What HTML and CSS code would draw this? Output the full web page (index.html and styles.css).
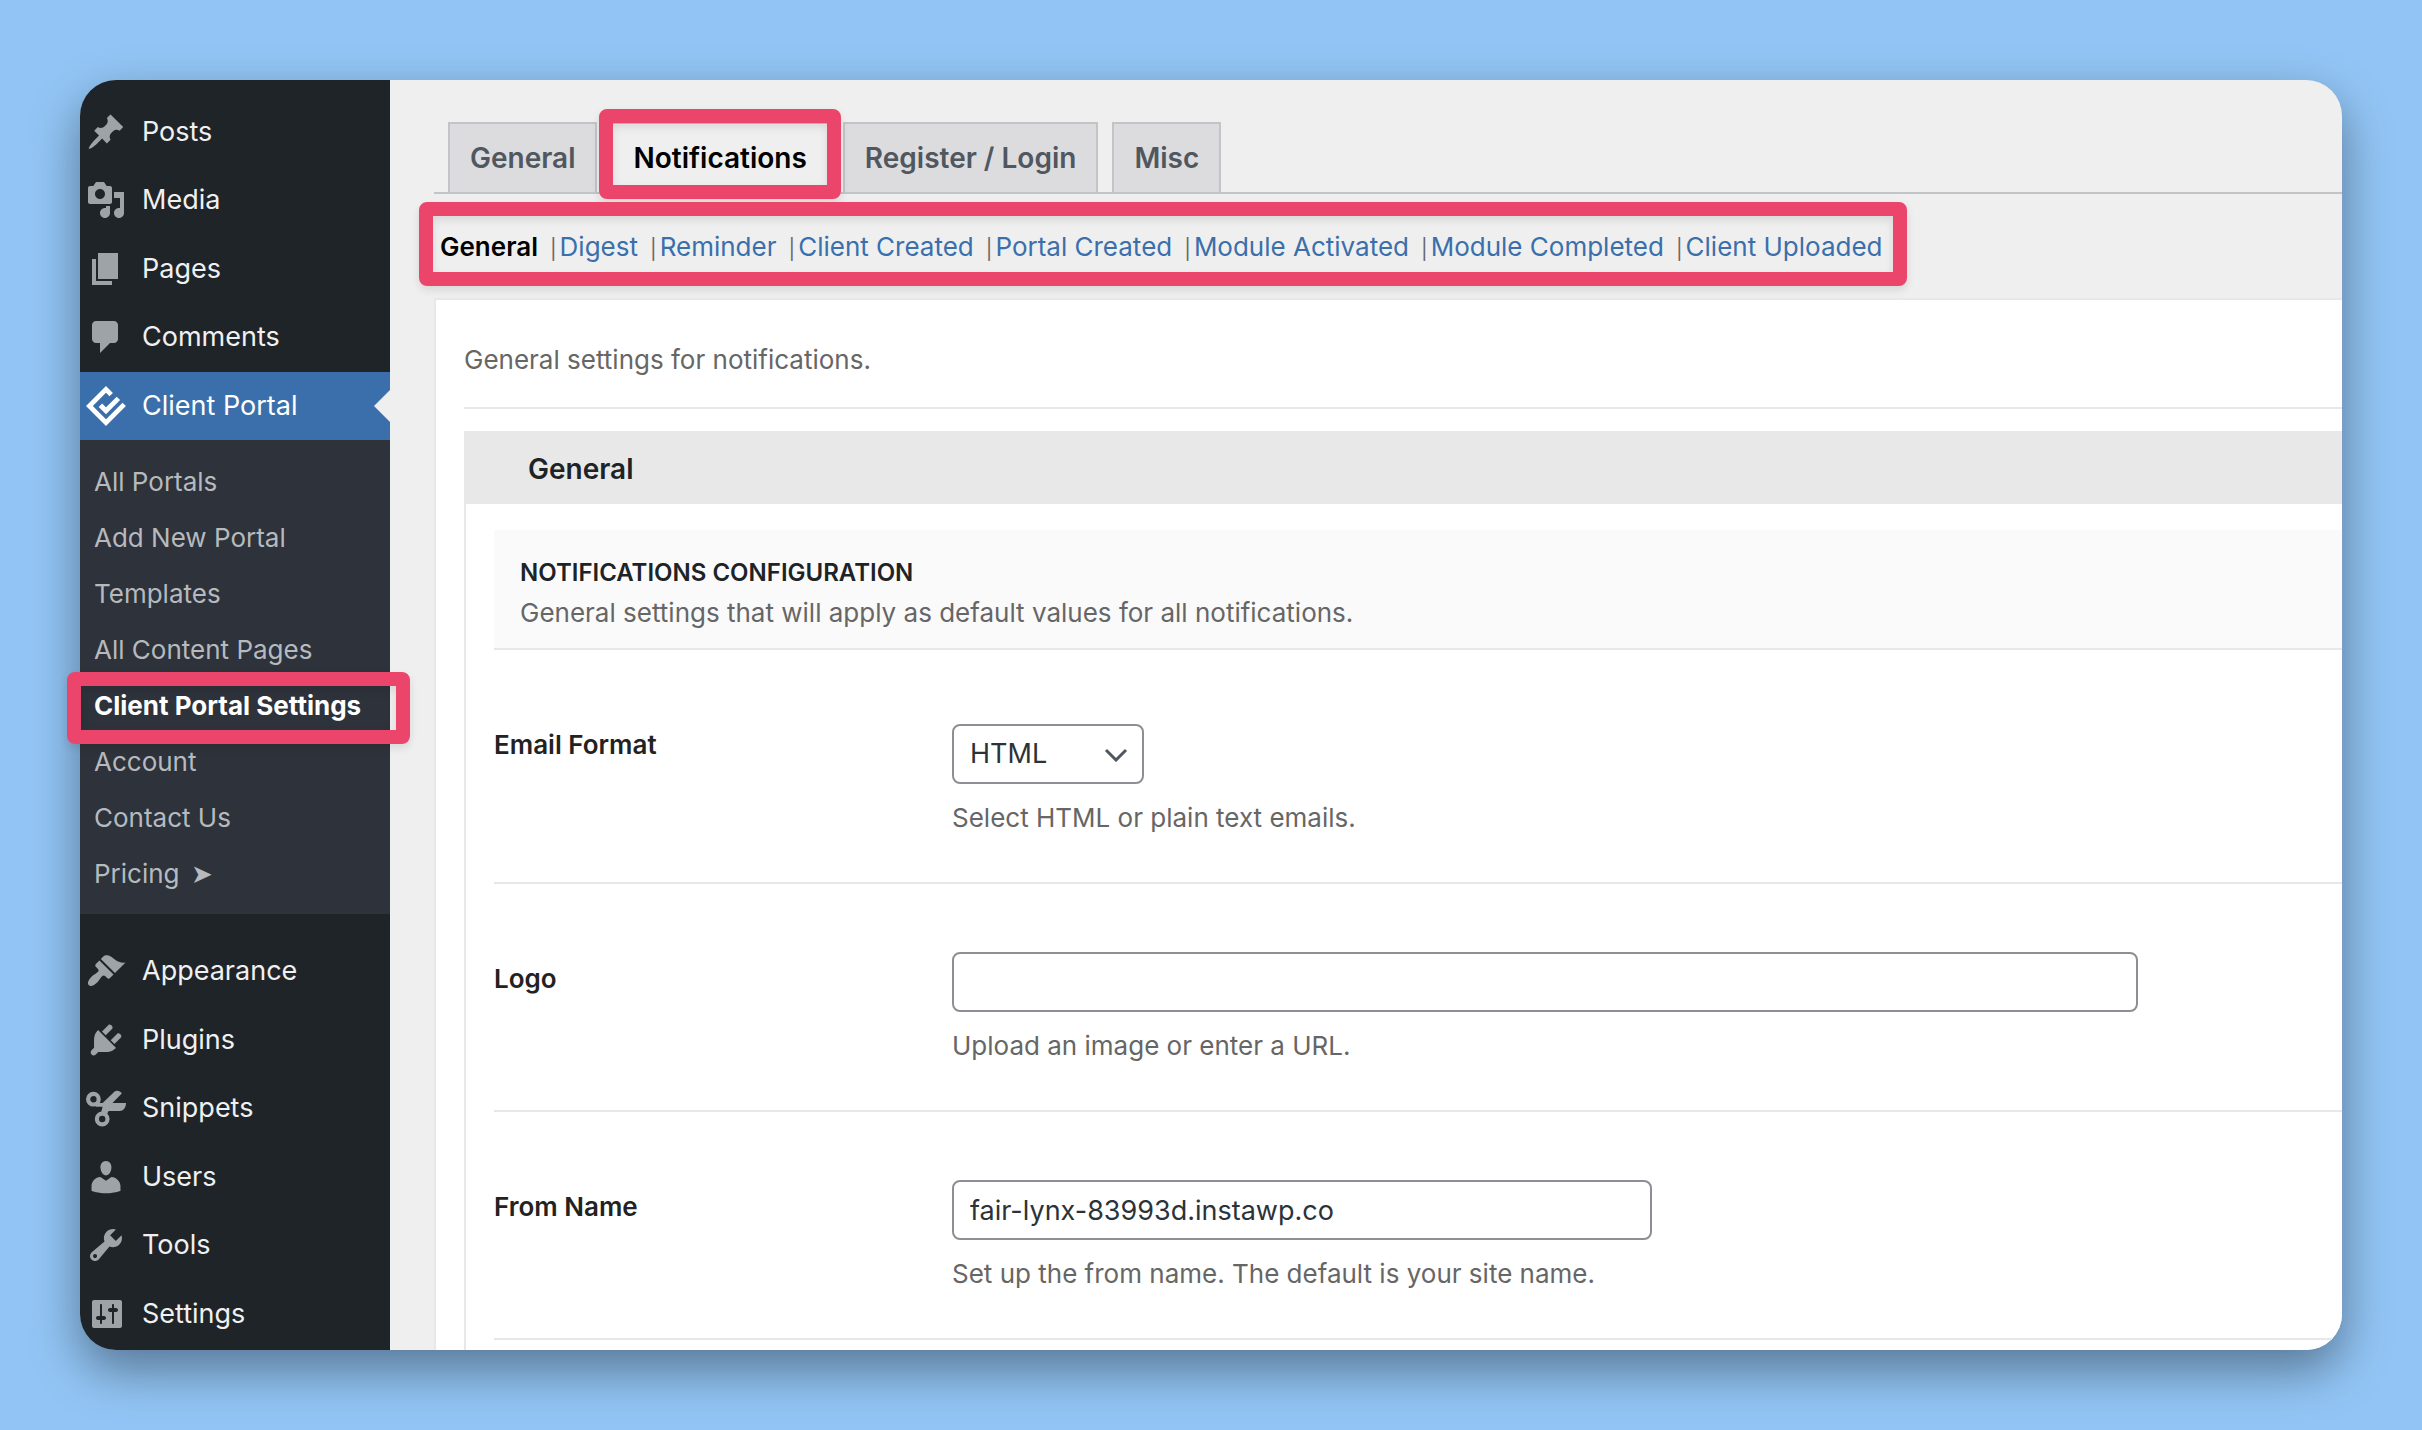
FILE: index.html
```html
<!DOCTYPE html>
<html lang="en">
<head>
  <meta charset="UTF-8">
  <meta name="viewport" content="width=device-width, initial-scale=1.0">
  <title>Client Portal Settings</title>
  <link rel="stylesheet" href="styles.css">
</head>
<body>
  <div class="window">
    <nav class="sidebar" aria-label="Main menu">
      <ul class="menu">
        <li><a href="#"><svg viewBox="0 0 20 20"><path d="M10.44 3.02l1.82-1.82 6.36 6.35-1.83 1.82c-1.05-.68-2.48-.57-3.41.36l-.75.75c-.92.93-1.04 2.35-.35 3.41l-1.83 1.82-2.41-2.41-2.8 2.79c-.42.42-3.38 2.71-3.8 2.29s1.86-3.39 2.28-3.81l2.79-2.79L4.1 9.36l1.83-1.82c1.05.69 2.48.57 3.4-.36l.75-.75c.93-.92 1.05-2.35.36-3.41z"/></svg>Posts</a></li>
        <li><a href="#"><svg viewBox="0 0 20 20"><path d="M13 11V4c0-.55-.45-1-1-1h-1.67L9 1H5L3.67 3H2c-.55 0-1 .45-1 1v7c0 .55.45 1 1 1h10c.55 0 1-.45 1-1zM7 4.5c1.38 0 2.5 1.12 2.5 2.5S8.38 9.5 7 9.5 4.5 8.38 4.5 7 5.62 4.5 7 4.5zM14 6h5v10.5c0 1.38-1.12 2.5-2.5 2.5S14 17.88 14 16.5s1.12-2.5 2.5-2.5c.17 0 .34.02.5.05V9h-3V6zm-4 8.05V13h2v3.5c0 1.38-1.12 2.5-2.5 2.5S7 17.88 7 16.5 8.12 14 9.5 14c.17 0 .34.02.5.05z"/></svg>Media</a></li>
        <li><a href="#"><svg viewBox="0 0 20 20"><path d="M6 15V2h10v13H6zm-1 1h8v2H3V5h2v11z"/></svg>Pages</a></li>
        <li><a href="#"><svg viewBox="0 0 20 20"><path d="M5 2h9c1.1 0 2 .9 2 2v7c0 1.1-.9 2-2 2h-2l-5 5v-5H5c-1.1 0-2-.9-2-2V4c0-1.1.9-2 2-2z"/></svg>Comments</a></li>
        <li class="open">
          <a href="#" class="active"><svg viewBox="0 0 20 20"><g fill="none" stroke="currentColor" stroke-width="2.4"><path d="M12.6 4.3L10 1.7 1.7 10l8.3 8.3 9.1-9.1"/><path d="M7.2 9.6l2.8 2.8 6.2-6.2"/></g></svg>Client Portal</a>
          <ul class="submenu">
            <li><a href="#">All Portals</a></li>
            <li><a href="#">Add New Portal</a></li>
            <li><a href="#">Templates</a></li>
            <li><a href="#">All Content Pages</a></li>
            <li><a href="#" class="current marked">Client Portal Settings</a></li>
            <li><a href="#">Account</a></li>
            <li><a href="#">Contact Us</a></li>
            <li><a href="#">Pricing <span class="arrow">➤</span></a></li>
          </ul>
        </li>
        <li><a href="#"><svg viewBox="0 0 20 20"><path d="M14.48 11.06L7.41 3.99l1.5-1.5c.5-.56 2.3-.47 3.51.32 1.21.8 1.43 1.28 2.91 2.1 1.18.64 2.45 1.26 4.45.85zm-.71.71L6.7 4.7 4.93 6.47c-.39.39-.39 1.02 0 1.41l1.06 1.06c.39.39.39 1.03 0 1.42-.6.6-1.43 1.11-2.21 1.69-.35.26-.7.53-1.01.84C1.43 14.23.4 16.08 1.4 17.07c.99 1 2.84-.03 4.18-1.36.31-.31.58-.66.85-1.02.57-.78 1.08-1.61 1.69-2.21.39-.39 1.02-.39 1.41 0l1.06 1.06c.39.39 1.02.39 1.41 0z"/></svg>Appearance</a></li>
        <li><a href="#"><svg viewBox="0 0 20 20"><path d="M13.11 4.36L9.87 7.6 8 5.73l3.24-3.24c.35-.34 1.05-.2 1.56.32.52.51.66 1.21.31 1.55zm-8 1.77l.91-1.12 9.01 9.01-1.19.84c-.71.71-2.63 1.16-3.82 1.16H6.14L4.9 17.26c-.59.59-1.54.59-2.12 0-.59-.58-.59-1.53 0-2.12l1.24-1.24v-3.88c0-1.13.4-3.19 1.09-3.89zm7.26 3.97l3.24-3.24c.34-.35 1.04-.21 1.55.31.52.51.66 1.21.31 1.55l-3.24 3.25z"/></svg>Plugins</a></li>
        <li><a href="#"><svg viewBox="0 0 20 20"><g fill="none" stroke="currentColor" stroke-width="2.1"><circle cx="3.7" cy="5.6" r="2.65"/><circle cx="8.1" cy="15.5" r="2.65"/></g><path d="M5.8 7.5H8.3L13.8 2.2c1.2-1.2 3.2-1 4.1.6L13.2 7.5H20c0 2.3-1.3 4-3.2 4H11.3L10.2 13.6 7.5 12.5 8.3 9.4H4.8z"/></svg>Snippets</a></li>
        <li><a href="#"><svg viewBox="0 0 20 20"><path d="M10 9.25c-2.27 0-2.73-3.44-2.73-3.44C7 4.02 7.82 2 9.97 2c2.16 0 2.98 2.02 2.71 3.81 0 0-.41 3.44-2.68 3.44zm0 2.57L12.72 10c2.39 0 4.52 2.33 4.52 4.53v2.49s-3.65 1.13-7.24 1.13c-3.65 0-7.24-1.13-7.24-1.13v-2.49c0-2.25 1.94-4.48 4.47-4.48z"/></svg>Users</a></li>
        <li><a href="#"><svg viewBox="0 0 20 20"><path d="M16.68 9.77c-1.34 1.34-3.3 1.67-4.95.99l-5.41 6.52c-.99.99-2.59.99-3.58 0s-.99-2.59 0-3.57l6.52-5.42c-.68-1.65-.35-3.61.99-4.95 1.28-1.28 3.12-1.62 4.72-1.06l-2.89 2.89 2.82 2.82 2.86-2.87c.53 1.58.18 3.39-1.08 4.65zM3.81 16.21c.4.39 1.04.39 1.43 0 .4-.4.4-1.04 0-1.43-.39-.4-1.03-.4-1.43 0-.39.39-.39 1.03 0 1.43z"/></svg>Tools</a></li>
        <li><a href="#"><svg viewBox="0 0 20 20"><path d="M18 16V4c0-.55-.45-1-1-1H4c-.55 0-1 .45-1 1v12c0 .55.45 1 1 1h13c.55 0 1-.45 1-1zM8 11h1c.55 0 1 .45 1 1s-.45 1-1 1H8v1.5c0 .28-.22.5-.5.5s-.5-.22-.5-.5V13H6c-.55 0-1-.45-1-1s.45-1 1-1h1V5.5c0-.28.22-.5.5-.5s.5.22.5.5V11zm5-2h-1c-.55 0-1-.45-1-1s.45-1 1-1h1V5.5c0-.28.22-.5.5-.5s.5.22.5.5V7h1c.55 0 1 .45 1 1s-.45 1-1 1h-1v5.5c0 .28-.22.5-.5.5s-.5-.22-.5-.5V9z"/></svg>Settings</a></li>
      </ul>
    </nav>

    <main class="content">
      <nav class="tabs" aria-label="Settings">
        <a href="#">General</a>
        <a href="#" class="active marked">Notifications</a>
        <a href="#">Register / Login</a>
        <a href="#">Misc</a>
      </nav>
      <ul class="subnav marked">
        <li><a href="#" class="current">General</a></li>
        <li><a href="#">Digest</a></li>
        <li><a href="#">Reminder</a></li>
        <li><a href="#">Client Created</a></li>
        <li><a href="#">Portal Created</a></li>
        <li><a href="#">Module Activated</a></li>
        <li><a href="#">Module Completed</a></li>
        <li><a href="#">Client Uploaded</a></li>
      </ul>

      <section class="panel">
        <p class="intro">General settings for notifications.</p>
        <form class="card">
          <h2>General</h2>
          <div class="card-body">
            <div class="config">
              <h3>Notifications Configuration</h3>
              <p>General settings that will apply as default values for all notifications.</p>
            </div>
            <div class="row">
              <label for="email-format">Email Format</label>
              <div class="field">
                <div class="select">
                  <select id="email-format">
                    <option>HTML</option>
                    <option>Plain text</option>
                  </select>
                  <svg viewBox="0 0 24 14"><path d="M2 2l10 10L22 2"/></svg>
                </div>
                <p>Select HTML or plain text emails.</p>
              </div>
            </div>
            <div class="row">
              <label for="logo">Logo</label>
              <div class="field">
                <input type="text" id="logo" class="wide">
                <p>Upload an image or enter a URL.</p>
              </div>
            </div>
            <div class="row">
              <label for="from-name">From Name</label>
              <div class="field">
                <input type="text" id="from-name" value="fair-lynx-83993d.instawp.co">
                <p>Set up the from name. The default is your site name.</p>
              </div>
            </div>
          </div>
        </form>
      </section>
    </main>
  </div>
</body>
</html>
```
FILE: styles.css
```css
:root {
  --page-bg: #92c5f5;
  --menu-bg: #1f2428;
  --submenu-bg: #2e323a;
  --blue: #3a6fac;
  --pink: #eb456c;
  --line: #e8e8e8;
  --muted: #666666;
}
* {
  box-sizing: border-box;
}
body {
  margin: 0;
  height: 100vh;
  padding: 80px;
  background: var(--page-bg);
  font-family: Inter, sans-serif;
  font-size: 26px;
  line-height: 40px;
  color: var(--muted);
}
ul {
  list-style: none;
  margin: 0;
  padding: 0;
}
a {
  text-decoration: none;
  color: var(--blue);
}
p, h2, h3 {
  margin: 0;
}
.window {
  display: flex;
  height: 100%;
  border-radius: 36px;
  box-shadow: 0 20px 50px rgba(0, 0, 0, 0.4);
}

/* Highlight frames */
.marked {
  position: relative;
}
.marked::after {
  content: "";
  position: absolute;
  z-index: 2;
  border: 14px solid var(--pink);
  border-radius: 8px;
  box-shadow: 0 4px 8px rgba(0, 0, 0, 0.1), inset 0 4px 8px rgba(0, 0, 0, 0.1);
  pointer-events: none;
}

/* Sidebar */
.sidebar {
  flex: 0 0 310px;
  display: flex;
  background: var(--menu-bg);
  border-radius: 36px 0 0 36px;
}
.menu {
  flex: 1;
  display: flex;
  flex-direction: column;
  padding: 18px 0 2px;
}
.menu > li {
  flex: 1 0 auto;
}
.menu > li > a {
  position: relative;
  display: flex;
  align-items: center;
  gap: 16px;
  height: 68px;
  padding-left: 6px;
  color: #f0f0f1;
  font-size: 27px;
}
.menu svg {
  width: 40px;
  height: 40px;
  fill: #9ea3a8;
  color: #9ea3a8;
}
.menu > li.open {
  margin-bottom: 23px;
}
.menu > li > a.active {
  background: var(--blue);
  color: #ffffff;
}
.menu .active svg {
  color: #ffffff;
}
.active::before {
  content: "";
  position: absolute;
  right: 0;
  border: 16px solid transparent;
  border-left: 0;
  border-right-color: #efefef;
}
.submenu {
  padding: 14px 0 12px;
  background: var(--submenu-bg);
}
.submenu a {
  display: block;
  padding-left: 14px;
  font-size: 26px;
  line-height: 56px;
  color: #b6babe;
}
.submenu .current {
  font-weight: 700;
  color: #ffffff;
}
.submenu .marked::after {
  inset: -6px -20px -10px -13px;
}
.arrow {
  margin-left: 4px;
}

/* Content */
.content {
  flex: 1;
  display: flex;
  flex-direction: column;
  min-width: 0;
  overflow: hidden;
  padding: 42px 0 0 44px;
  background: #efefef;
  border-radius: 0 36px 36px 0;
}
.tabs {
  display: flex;
  gap: 14px;
  padding-left: 14px;
  border-bottom: 2px solid #c3c4c7;
}
.tabs a {
  padding: 14px 20px;
  border: 2px solid #c3c4c7;
  border-bottom: 0;
  background: #dcdcde;
  color: #50575e;
  font-size: 28px;
  font-weight: 600;
}
.tabs .active {
  background: #efefef;
  color: #000000;
}
.tabs .active::before {
  display: none;
}
.tabs .marked::after {
  inset: -15px -14px -7px;
}
.subnav {
  display: flex;
  width: max-content;
  margin-top: 22px;
  padding: 11px 11px 5px 6px;
}
.subnav li + li::before {
  content: "|";
  margin: 0 3px 0 12px;
  font-size: 20px;
  line-height: 1;
}
.subnav .current {
  font-weight: 600;
  color: #000000;
}
.subnav.marked::after {
  inset: -14px -14px -14px -15px;
}
.panel {
  flex: 1;
  display: flex;
  flex-direction: column;
  margin-top: 26px;
  padding: 40px 0 0 28px;
  border: 2px solid var(--line);
  border-width: 2px 0 0 2px;
  background: #ffffff;
}
.intro {
  padding-bottom: 27px;
  border-bottom: 2px solid var(--line);
}
.card {
  flex: 1;
  margin-top: 22px;
  border-left: 2px solid var(--line);
}
.card h2 {
  padding: 18px 62px 15px;
  background: var(--line);
  color: #1d2327;
  font-size: 28px;
  font-weight: 600;
}
.card-body {
  padding: 26px 0 0 28px;
}
.config {
  padding: 23px 26px 15px;
  border-bottom: 2px solid var(--line);
  background: #fafafa;
}
.config h3 {
  color: #1d2327;
  font-size: 24px;
  font-weight: 600;
  text-transform: uppercase;
}
.row {
  display: grid;
  grid-template-columns: 458px 1fr;
  padding: 68px 0 44px;
  border-bottom: 2px solid var(--line);
}
.row label {
  padding-top: 7px;
  color: #222222;
  font-weight: 600;
}
.field p {
  margin-top: 14px;
}
.field input,
.field select {
  display: block;
  width: 700px;
  max-width: 100%;
  height: 60px;
  padding: 0 16px;
  border: 2px solid #8c8f94;
  border-radius: 8px;
  background: #ffffff;
  color: #2c3338;
  font: inherit;
  font-size: 27px;
}
.field .wide {
  width: 1186px;
}
.select {
  position: relative;
  width: 192px;
  margin-top: 6px;
}
.field select {
  width: 100%;
  appearance: none;
}
.select svg {
  position: absolute;
  top: 24px;
  right: 16px;
  width: 24px;
  height: 14px;
  fill: none;
  stroke: #50575e;
  stroke-width: 3;
  pointer-events: none;
}
```
